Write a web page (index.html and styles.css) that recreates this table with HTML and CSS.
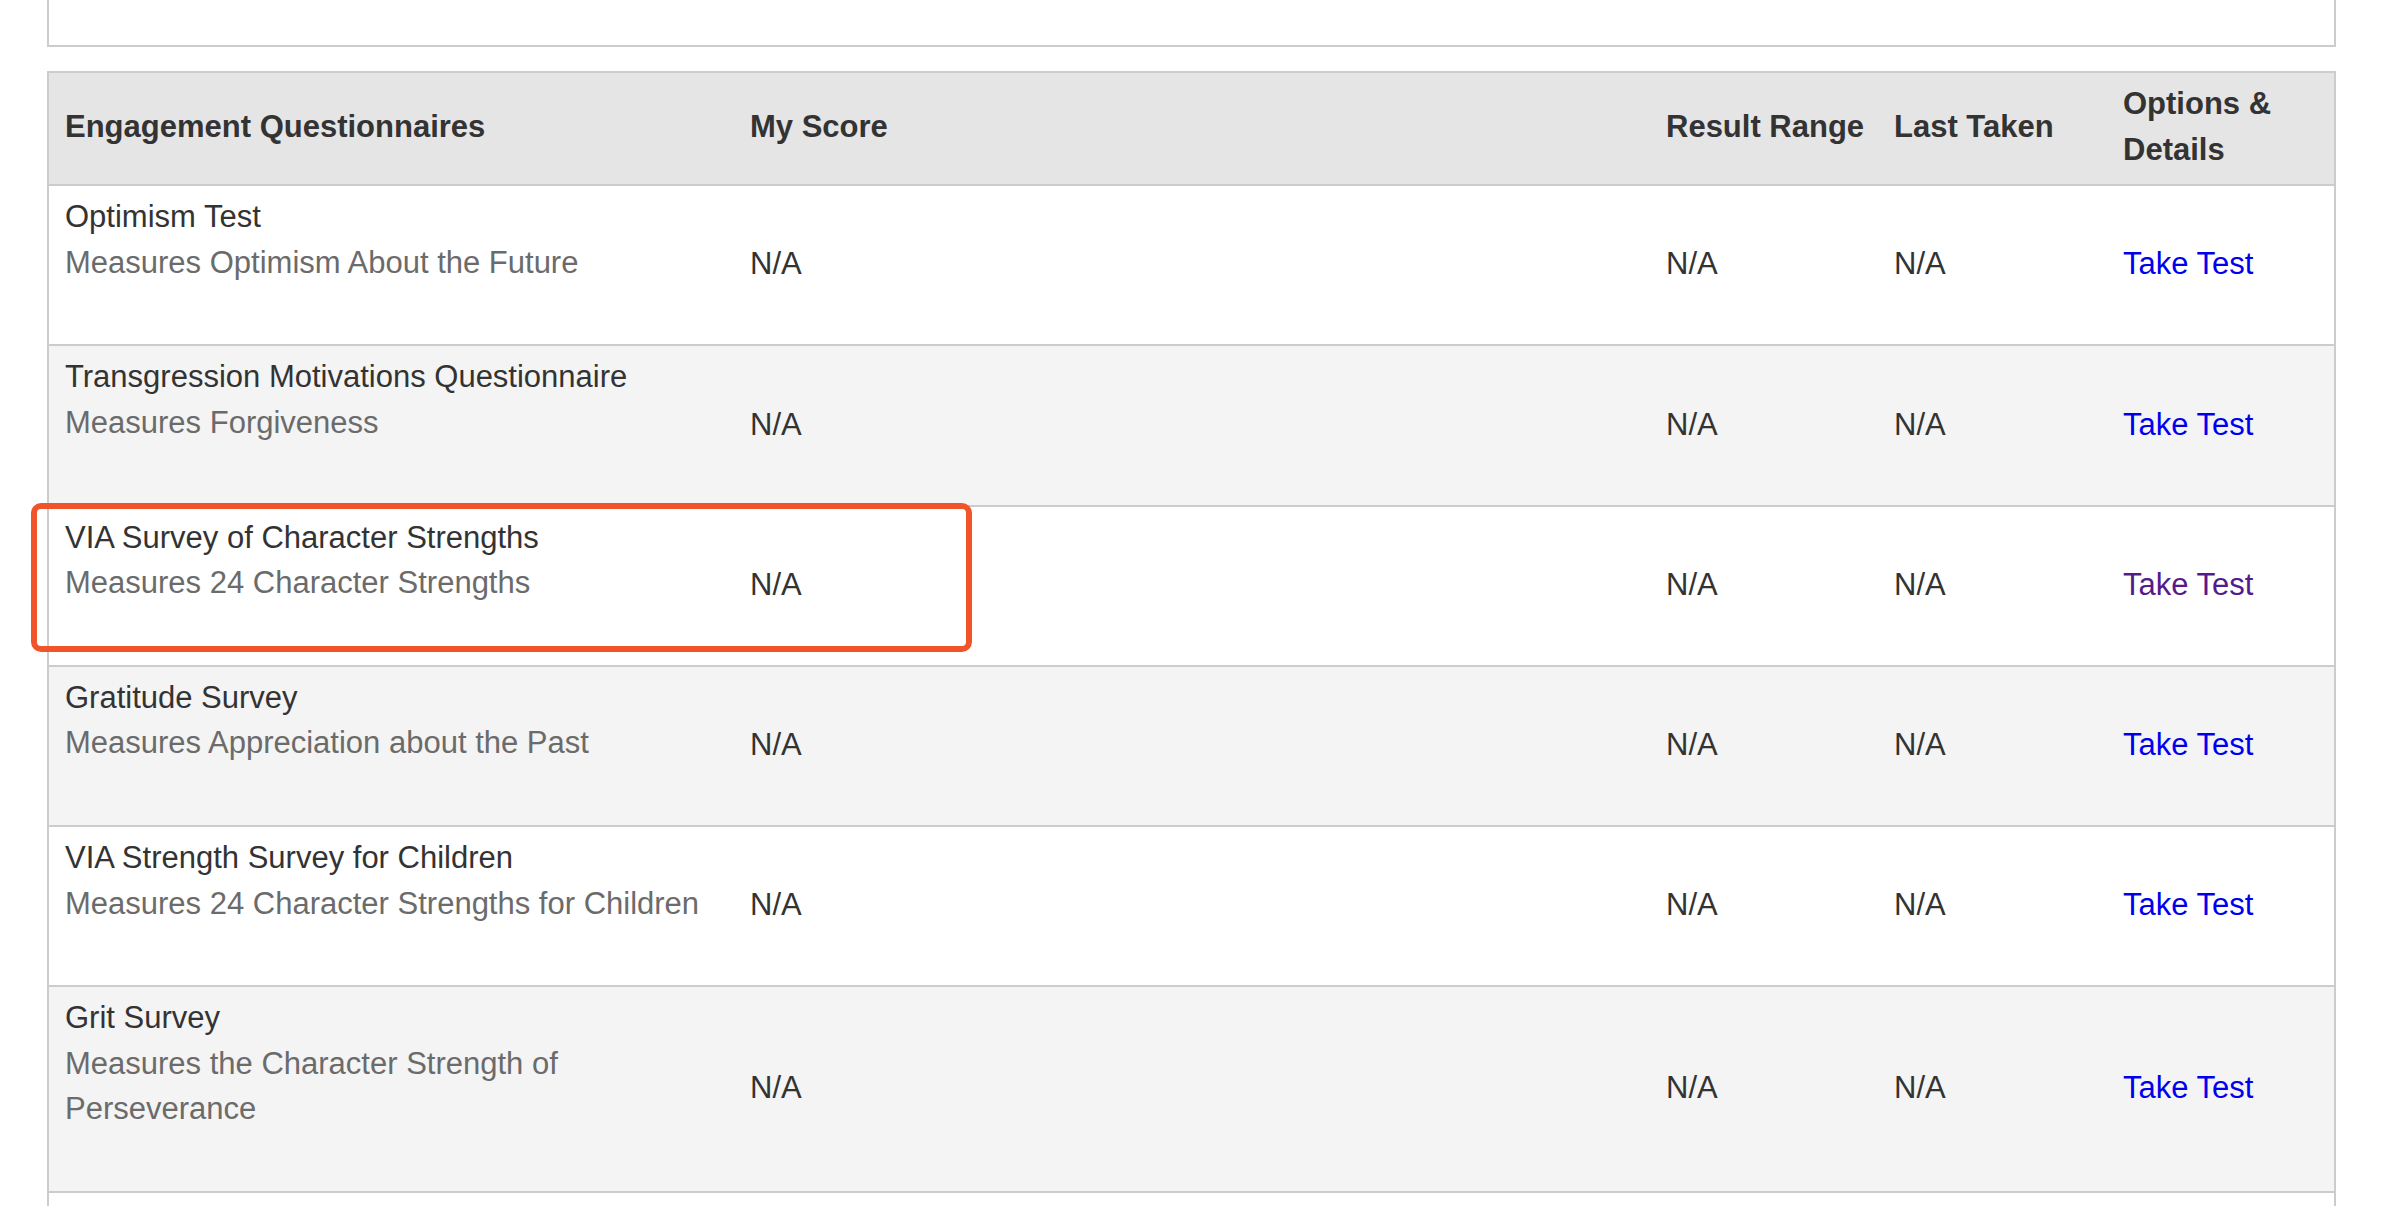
FILE: index.html
```html
<!DOCTYPE html>
<html lang="en">
<head>
<meta charset="utf-8">
<title>Engagement Questionnaires</title>
<link rel="stylesheet" href="styles.css">
</head>
<body>
<div class="page">
  <div class="top-box"></div>
  <table class="q-table">
    <colgroup>
      <col class="c-name">
      <col class="c-score">
      <col class="c-range">
      <col class="c-last">
      <col class="c-opt">
    </colgroup>
    <thead>
      <tr>
        <th>Engagement Questionnaires</th>
        <th>My Score</th>
        <th>Result Range</th>
        <th>Last Taken</th>
        <th>Options &amp; Details</th>
      </tr>
    </thead>
    <tbody>
      <tr>
        <td class="name"><div class="title">Optimism Test</div><div class="desc">Measures Optimism About the Future</div></td>
        <td>N/A</td><td>N/A</td><td>N/A</td>
        <td><a class="link" href="#">Take Test</a></td>
      </tr>
      <tr>
        <td class="name"><div class="title">Transgression Motivations Questionnaire</div><div class="desc">Measures Forgiveness</div></td>
        <td>N/A</td><td>N/A</td><td>N/A</td>
        <td><a class="link" href="#">Take Test</a></td>
      </tr>
      <tr>
        <td class="name"><div class="title">VIA Survey of Character Strengths</div><div class="desc">Measures 24 Character Strengths</div></td>
        <td>N/A</td><td>N/A</td><td>N/A</td>
        <td><a class="link visited" href="#">Take Test</a></td>
      </tr>
      <tr>
        <td class="name"><div class="title">Gratitude Survey</div><div class="desc">Measures Appreciation about the Past</div></td>
        <td>N/A</td><td>N/A</td><td>N/A</td>
        <td><a class="link" href="#">Take Test</a></td>
      </tr>
      <tr>
        <td class="name"><div class="title">VIA Strength Survey for Children</div><div class="desc">Measures 24 Character Strengths for Children</div></td>
        <td>N/A</td><td>N/A</td><td>N/A</td>
        <td><a class="link" href="#">Take Test</a></td>
      </tr>
      <tr>
        <td class="name"><div class="title">Grit Survey</div><div class="desc">Measures the Character Strength of Perseverance</div></td>
        <td>N/A</td><td>N/A</td><td>N/A</td>
        <td><a class="link" href="#">Take Test</a></td>
      </tr>
      <tr class="spacer-row">
        <td></td><td></td><td></td><td></td><td></td>
      </tr>
    </tbody>
  </table>
  <div class="highlight"></div>
</div>
</body>
</html>
```
FILE: styles.css
```css
html, body {
  margin: 0;
  padding: 0;
  background: #ffffff;
}

body {
  font-family: "Liberation Sans", Arial, Helvetica, sans-serif;
  color: #333333;
  overflow: hidden;
}

.page {
  position: relative;
  padding-left: 47px;
  width: 2289px;
}

.top-box {
  height: 45px;
  border: 2px solid #cccccc;
  border-top: none;
}

.q-table {
  margin-top: 24px;
  width: 2289px;
  table-layout: fixed;
  border-collapse: separate;
  border-spacing: 0;
  border: 2px solid #cccccc;
  border-bottom: none;
  font-size: 31px;
  line-height: 45.6px;
}

.c-name { width: 685px; }
.c-score { width: 916px; }
.c-range { width: 228px; }
.c-last { width: 229px; }
.c-opt { width: 227px; }

.q-table th {
  background: #e5e5e5;
  font-weight: bold;
  text-align: left;
  vertical-align: middle;
  padding: 8px 4px 12px 16px;
  border-bottom: 2px solid #cccccc;
  color: #333333;
}

.q-table td {
  padding: 0 6px 2px 16px;
  vertical-align: middle;
  border-bottom: 2px solid #cccccc;
}

.q-table td.name {
  padding-top: 8px;
  padding-bottom: 59px;
  vertical-align: top;
}

.q-table tbody tr:nth-child(even) td {
  background: #f4f4f4;
}

.q-table tr.spacer-row td {
  height: 60px;
  padding: 0;
  border-bottom: none;
}

.title {
  color: #333333;
}

.desc {
  color: #6b6b6b;
}

.link {
  color: #0000ee;
  text-decoration: none;
}

.link.visited {
  color: #551a8b;
}

.highlight {
  position: absolute;
  left: 31px;
  top: 503px;
  width: 941px;
  height: 149px;
  box-sizing: border-box;
  border: 6px solid #ef5529;
  border-radius: 10px;
  pointer-events: none;
}
```
